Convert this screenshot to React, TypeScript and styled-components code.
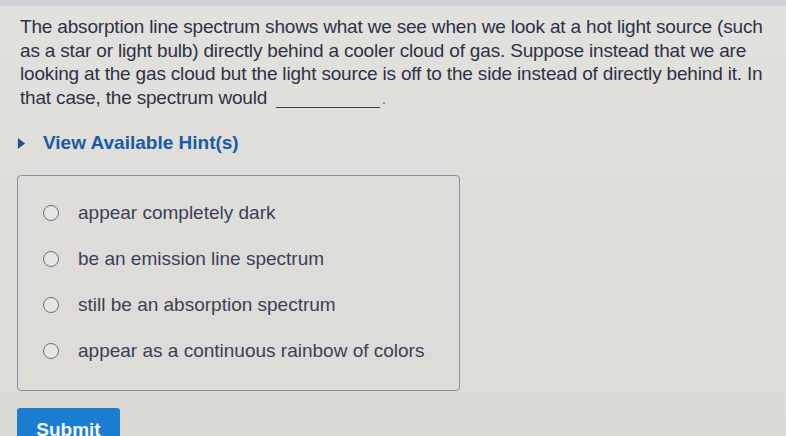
import React from 'react';
import styled, { createGlobalStyle } from 'styled-components';

const GlobalStyle = createGlobalStyle`
  html, body {
    margin: 0;
    padding: 0;
    background: #dfdedb;
  }
  body {
    font-family: 'Liberation Sans', Arial, sans-serif;
  }
`;

const options = [
  'appear completely dark',
  'be an emission line spectrum',
  'still be an absorption spectrum',
  'appear as a continuous rainbow of colors',
];

function App() {
  return (
    <>
      <GlobalStyle />
      <Page>
        <TopStrip />
        <Question>
          The absorption line spectrum shows what we see when we look at a hot light source (such
          <br />
          as a star or light bulb) directly behind a cooler cloud of gas. Suppose instead that we are
          <br />
          looking at the gas cloud but the light source is off to the side instead of directly behind it. In
          <br />
          that case, the spectrum would <Blank />
          <Period>.</Period>
        </Question>
        <HintToggle>
          <Caret viewBox="0 0 10 14">
            <path d="M1 1 L9 7 L1 13 Z" fill="#1c4f94" />
          </Caret>
          View Available Hint(s)
        </HintToggle>
        <Choices>
          {options.map((text) => (
            <Choice key={text}>
              <Radio />
              {text}
            </Choice>
          ))}
        </Choices>
        <SubmitButton>Submit</SubmitButton>
      </Page>
    </>
  );
}

export default App;

const Page = styled.div`
  width: 786px;
  height: 436px;
  overflow: hidden;
  background: linear-gradient(180deg, #e2e1de 0%, #dedcd8 60%, #dddbd6 100%);
  padding: 0 0 0 17px;
  box-sizing: border-box;
`;

const TopStrip = styled.div`
  height: 6px;
  margin-left: -17px;
  background: #cdd0d6;
`;

const Question = styled.p`
  margin: 9px 0 0 3px;
  font-size: 19px;
  line-height: 23.5px;
  color: #2e3246;
  white-space: nowrap;
  letter-spacing: -0.18px;
`;

const Blank = styled.span`
  display: inline-block;
  width: 104px;
  height: 1px;
  margin-left: 4px;
  border-bottom: 1.5px solid #3a3d4c;
  vertical-align: -4px;
`;

const Period = styled.span`
  margin-left: 2px;
  font-size: 12px;
`;

const HintToggle = styled.div`
  display: flex;
  align-items: center;
  gap: 17px;
  margin-top: 20px;
  font-size: 19px;
  font-weight: bold;
  color: #1b5aa6;
`;

const Caret = styled.svg`
  width: 9px;
  height: 13px;
  flex: none;
`;

const Choices = styled.div`
  margin-top: 21px;
  width: 443px;
  height: 216px;
  box-sizing: border-box;
  border: 1.5px solid #8d8fa6;
  border-radius: 4px;
  padding: 26px 0 0 25px;
  display: flex;
  flex-direction: column;
  gap: 24px;
`;

const Choice = styled.label`
  display: flex;
  align-items: center;
  gap: 19px;
  height: 22px;
  font-size: 19px;
  color: #3b3f58;
`;

const Radio = styled.span`
  width: 16px;
  height: 16px;
  box-sizing: border-box;
  flex: none;
  border: 1.7px solid #6c6f82;
  border-radius: 50%;
  background: #e6e5e2;
`;

const SubmitButton = styled.button`
  margin-top: 17px;
  width: 103px;
  height: 40px;
  border: none;
  border-radius: 3px;
  background: #1a7dd0;
  color: #f4f8fc;
  font-family: 'Liberation Sans', Arial, sans-serif;
  font-size: 19px;
  font-weight: bold;
  padding: 3px 0 0;
  text-align: center;
  vertical-align: top;
  display: block;
`;
